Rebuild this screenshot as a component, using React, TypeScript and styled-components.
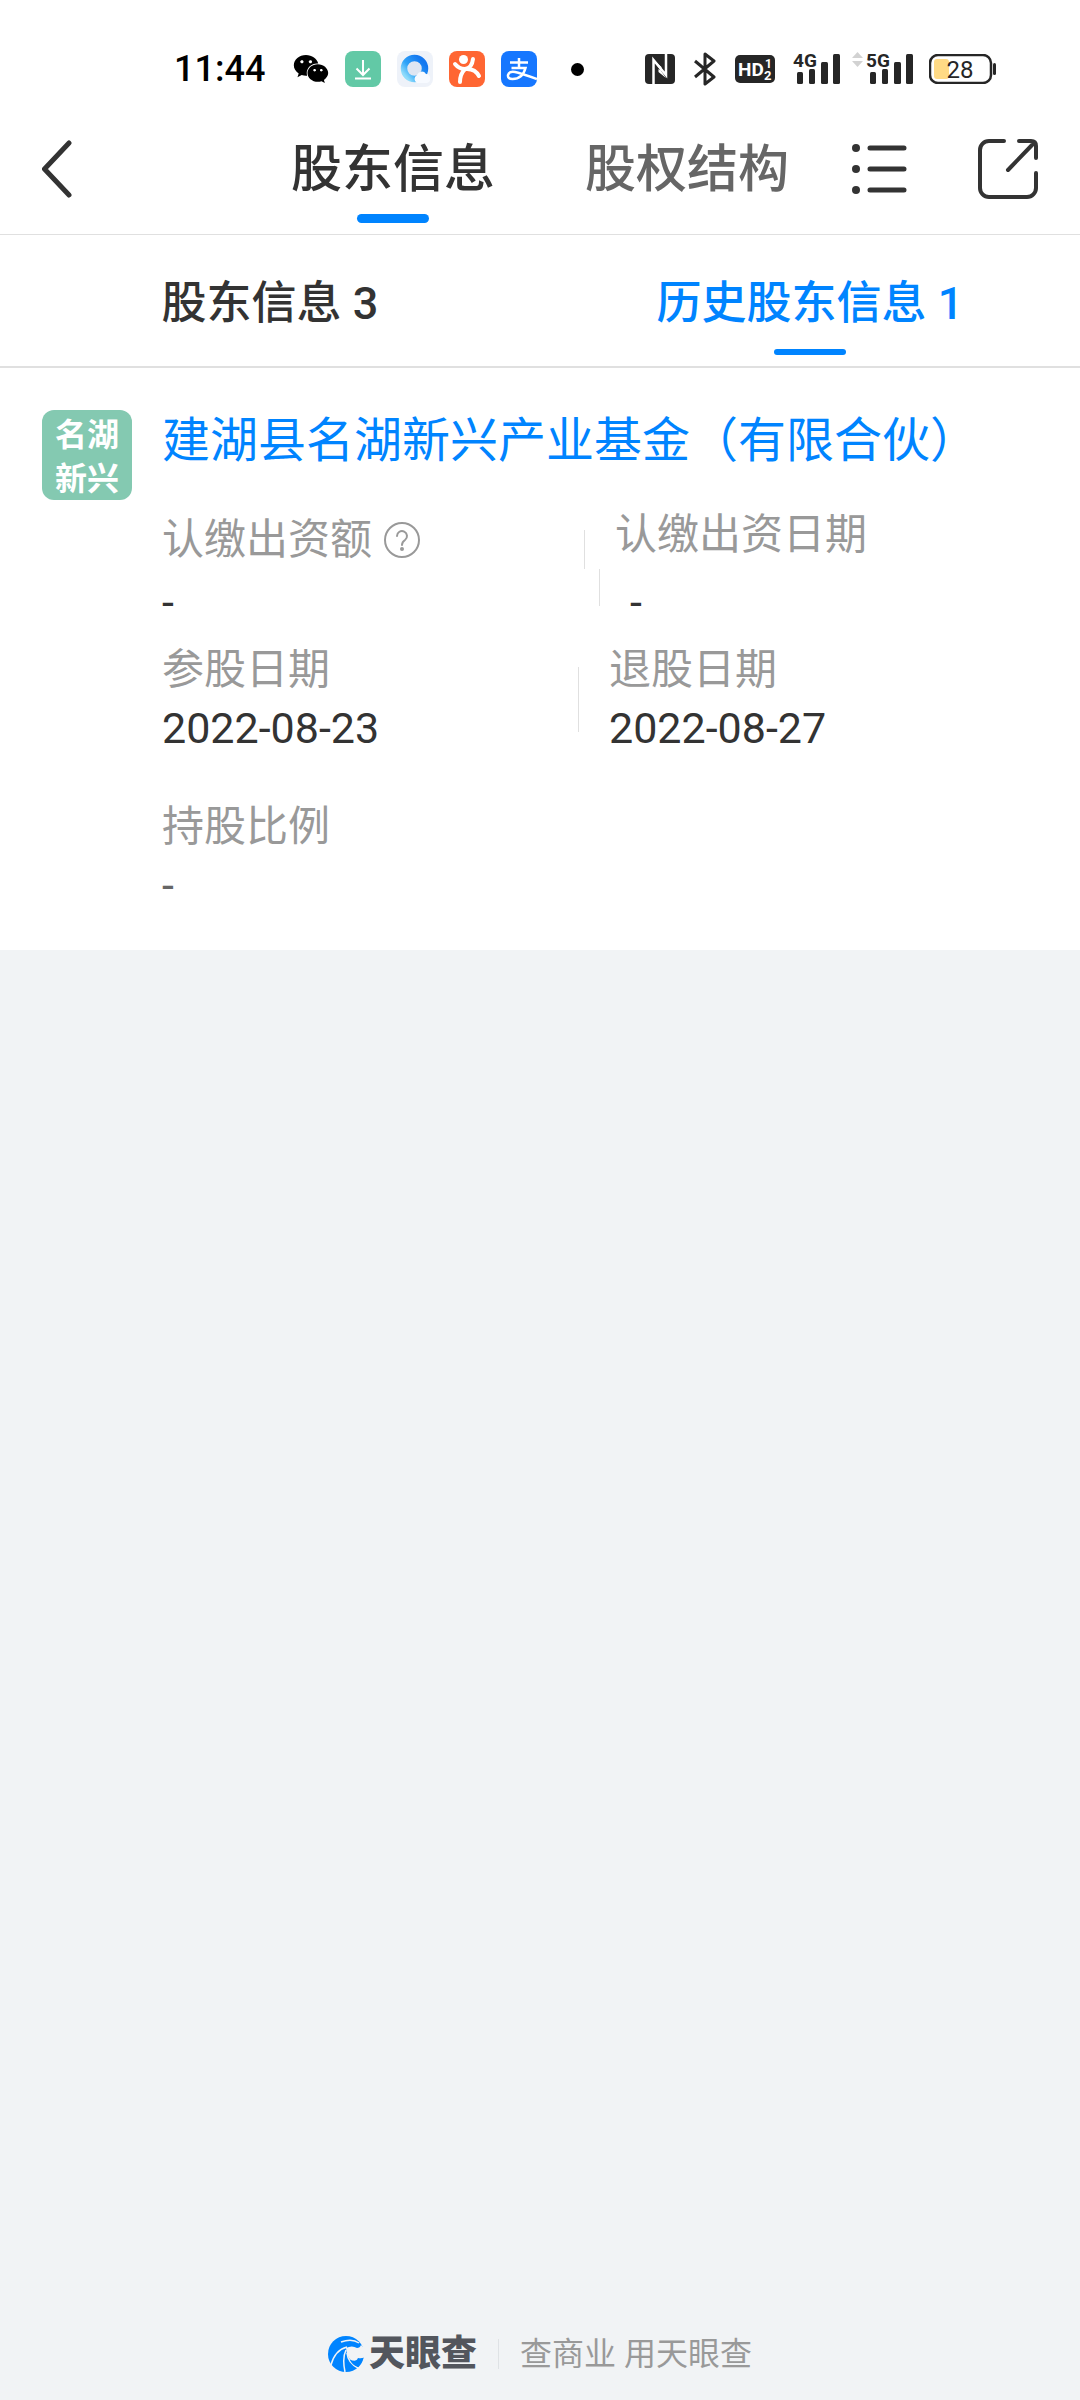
import React from "react";
import styled, { createGlobalStyle } from "styled-components";
import { FaWeixin } from "react-icons/fa";

const BLUE = "#0084ff";
const INK = "#333333";
const GREY = "#999999";
const LINE = "#e0e0e0";

const GlobalStyle = createGlobalStyle`
  * { box-sizing: border-box; }
  body {
    margin: 0;
    background: #f1f3f5;
    color: ${INK};
    font-family: Roboto, "Noto Sans CJK SC", sans-serif;
  }
  button {
    padding: 0;
    border: 0;
    background: none;
    color: inherit;
    font: inherit;
    cursor: pointer;
  }
  svg { display: block; flex: none; }
`;

const Page = styled.div`
  display: flex;
  flex-direction: column;
  min-height: 100vh;
`;

/* ---------- status bar ---------- */

const StatusBar = styled.div`
  display: flex;
  justify-content: space-between;
  align-items: flex-end;
  height: 103px;
  padding: 0 84px 16px 174px;
  background: #fff;
  color: #000;
`;

const StatusGroup = styled.div<{ $gap: number }>`
  display: flex;
  align-items: center;
  gap: ${(p) => p.$gap}px;
  height: 36px;
`;

const Clock = styled.time`
  margin-right: 12px;
  font-size: 36px;
  line-height: 38px;
  font-weight: 500;
`;

const MoreDot = styled.i`
  width: 13px;
  height: 13px;
  margin-left: 18px;
  border-radius: 50%;
  background: #000;
`;

const AppIcon = styled.span<{ $bg: string }>`
  display: block;
  width: 36px;
  height: 36px;
  border-radius: 8px;
  overflow: hidden;
  background: ${(p) => p.$bg};
`;

const Signal = ({ label, traffic }: { label: string; traffic?: boolean }) => (
  <svg width={traffic ? 61 : 47} height="48" viewBox={traffic ? "-14 -6 61 48" : "0 -6 47 48"}>
    {traffic && (
      <g fill="#d2d2d2">
        <path d="M-14 7h11L-8.500 1z" />
        <path d="M-14 10h11L-8.500 16z" />
      </g>
    )}
    <text x="0" y="16" fontFamily="Roboto" fontWeight="700" fontSize="19" fill="#262626">
      {label}
    </text>
    <g fill="#262626">
      <rect x="4" y="21" width="6" height="12" rx="1.500" />
      <rect x="16" y="18" width="6" height="15" rx="1.500" />
      <rect x="28" y="11" width="7" height="22" rx="1.500" />
      <rect x="40" y="3" width="7" height="30" rx="1.500" />
    </g>
  </svg>
);

/* ---------- navigation ---------- */

const NavBar = styled.header`
  display: grid;
  grid-template-columns: 1fr auto 1fr;
  align-items: center;
  height: 132px;
  padding: 0 42px;
  border-bottom: 1px solid ${LINE};
  background: #fff;
`;

const NavTabs = styled.nav`
  display: flex;
  align-self: stretch;
  gap: 90px;
`;

const Tab = styled.button<{ $active?: boolean; $size: number }>`
  position: relative;
  font-size: ${(p) => p.$size}px;
  font-weight: 500;
`;

const NavTab = styled(Tab)`
  padding-bottom: 8px;
  color: ${(p) => (p.$active ? INK : "#666666")};
`;

const Marker = styled.span<{ $height: number; $bottom: number }>`
  position: absolute;
  left: 50%;
  bottom: ${(p) => p.$bottom}px;
  width: 72px;
  height: ${(p) => p.$height}px;
  margin-left: -36px;
  border-radius: 5px;
  background: ${BLUE};
`;

const NavActions = styled.div`
  display: flex;
  justify-content: flex-end;
  align-items: center;
  gap: 70px;
`;

const IconButton = styled.button`
  display: block;
  justify-self: start;
`;

const SubTabs = styled.nav`
  display: grid;
  grid-template-columns: 1fr 1fr;
  height: 133px;
  border-bottom: 2px solid ${LINE};
  background: #fff;
`;

const SubTab = styled(Tab)`
  padding-bottom: 2px;
  color: ${(p) => (p.$active ? BLUE : INK)};
`;

/* ---------- shareholder card ---------- */

const Card = styled.article`
  display: grid;
  grid-template-columns: 90px 1fr;
  gap: 30px;
  padding: 42px 42px 36px;
  background: #fff;
`;

const Badge = styled.div`
  display: flex;
  flex-direction: column;
  justify-content: center;
  width: 90px;
  height: 90px;
  padding-top: 4px;
  border-radius: 12px;
  background: #84c9b1;
  color: #fff;
  font-size: 32px;
  line-height: 44px;
  font-weight: 700;
  text-align: center;
`;

const Name = styled.a`
  display: block;
  margin-bottom: 34px;
  color: ${BLUE};
  font-size: 48px;
  line-height: 62px;
  text-decoration: none;
`;

const Row = styled.div<{ $split: string; $gapTop?: number }>`
  display: grid;
  grid-template-columns: ${(p) => p.$split};
  margin-top: ${(p) => p.$gapTop ?? 0}px;
`;

const Field = styled.div`
  display: flex;
  flex-direction: column;
`;

const Divided = styled.div<{ $rule: number; $align: string }>`
  display: flex;
  gap: 30px;
  &::before {
    content: "";
    align-self: ${(p) => p.$align};
    width: 1px;
    height: ${(p) => p.$rule}px;
    background: ${LINE};
  }
`;

const Label = styled.div`
  display: flex;
  align-items: center;
  gap: 12px;
  color: ${GREY};
  font-size: 42px;
  line-height: 58px;
`;

const LabelRow = styled(Row)`
  height: 63px;
  & > ${Label} {
    align-self: end;
  }
  & > ${Divided} > ${Label} {
    align-self: flex-start;
  }
`;

const Value = styled.div<{ $muted?: boolean }>`
  color: ${(p) => (p.$muted ? "#666666" : INK)};
  font-size: 43px;
  line-height: 58px;
`;

const ValueRow = styled(Row)`
  ${Value} {
    padding-top: 4px;
  }
`;

/* ---------- footer ---------- */

const Footer = styled.footer`
  display: flex;
  justify-content: center;
  align-items: center;
  margin-top: auto;
  padding-bottom: 28px;
`;

const Brand = styled.span`
  margin-left: 5px;
  color: #53565d;
  font-size: 36px;
  line-height: 36px;
  font-weight: 900;
`;

const FooterRule = styled.i`
  width: 1px;
  height: 30px;
  margin: 0 21px;
  background: #dfe2e5;
`;

const Slogan = styled.span`
  color: ${GREY};
  font-size: 32px;
  line-height: 36px;
`;

export default function App() {
  return (
    <Page>
      <GlobalStyle />
      <StatusBar>
        <StatusGroup $gap={16}>
          <Clock>11:44</Clock>
          <FaWeixin size={36} />
          <AppIcon $bg="#62c9a6">
            <svg width="36" height="36" fill="none" stroke="#fff" strokeWidth="2">
              <path d="M18 9v15M11.500 17.500L18 24l6.500-6.500M10 27.500h16" />
            </svg>
          </AppIcon>
          <AppIcon $bg="#eef2f9">
            <svg width="36" height="36">
              <defs>
                <linearGradient id="ring" x1="0.9" y1="0.2" x2="0.1" y2="0.9">
                  <stop offset="0" stopColor="#1478f0" />
                  <stop offset="0.6" stopColor="#2fa4f8" />
                  <stop offset="1" stopColor="#8fdcfb" />
                </linearGradient>
              </defs>
              <circle cx="17.500" cy="17.500" r="10.500" fill="#dfe6f2" stroke="url(#ring)" strokeWidth="6.500" />
              <path
                d="M20 32a4.500 4.500 0 0 1 0-8 5 5 0 0 1 9-1 4.600 4.600 0 0 1 1 9z"
                fill="#f7faff"
              />
            </svg>
          </AppIcon>
          <AppIcon $bg="#ff6633">
            <svg width="36" height="36" fill="none" stroke="#fff" strokeWidth="4" strokeLinecap="round">
              <circle cx="14.500" cy="8.500" r="4.500" fill="#fff" stroke="none" />
              <path d="M6 13q4 5 10 5 7-1 8-10M16 18q-5 5-5 13M16 18q10-1 14 7" />
            </svg>
          </AppIcon>
          <AppIcon $bg="#1677ff">
            <svg width="36" height="36" fill="none" stroke="#fff" strokeWidth="2.500">
              <path d="M9 11.500h18M18 7v10M10.500 17h14q-3 11-13 11-5 0-4.500-4 1-4 7-3 5 1 22 7" />
            </svg>
          </AppIcon>
          <MoreDot />
        </StatusGroup>
        <StatusGroup $gap={16}>
          <StatusGroup $gap={18}>
            <svg width="30" height="30" viewBox="0 0 30 30">
              <rect width="30" height="30" rx="4" fill="#262626" />
              <path d="M8.500 30V6l12.500 15V0" fill="none" stroke="#fff" strokeWidth="2.500" />
              <path d="M8.500 6l8 7v4l-3-2v3l7.500 6" fill="#fff" />
            </svg>
            <svg width="24" height="34" viewBox="0 0 24 34" fill="none" stroke="#262626" strokeWidth="3" strokeLinejoin="round">
              <path d="M2 9l19 16-9 7V2l9 7L2 25" />
            </svg>
            <svg width="40" height="28" viewBox="0 0 40 28">
              <rect width="40" height="28" rx="5" fill="#262626" />
              <g fill="#fff" fontFamily="Roboto" fontWeight="700">
                <text x="3" y="21" fontSize="19">HD</text>
                <text x="30" y="13" fontSize="12">1</text>
                <text x="29" y="25" fontSize="13">2</text>
              </g>
            </svg>
            <StatusGroup $gap={12}>
              <Signal label="4G" />
              <Signal label="5G" traffic />
            </StatusGroup>
          </StatusGroup>
          <svg width="67" height="30" viewBox="0 0 67 30">
            <rect x="5" y="5" width="15" height="20" rx="3" fill="#ffda85" />
            <rect x="1" y="1" width="61" height="28" rx="8" fill="none" stroke="#262626" strokeWidth="2.500" />
            <rect x="64" y="9" width="3" height="12" rx="1.500" fill="#262626" />
            <text x="31" y="24" textAnchor="middle" fontFamily="Roboto" fontSize="24" fill="#262626">
              28
            </text>
          </svg>
        </StatusGroup>
      </StatusBar>

      <NavBar>
        <IconButton aria-label="返回">
          <svg width="30" height="58" viewBox="0 0 30 58" fill="none" stroke={INK} strokeWidth="5" strokeLinecap="round" strokeLinejoin="round">
            <path d="M27 3L2.500 29 27 55" />
          </svg>
        </IconButton>
        <NavTabs>
          <NavTab $active $size={51}>
            股东信息
            <Marker $height={9} $bottom={11} />
          </NavTab>
          <NavTab $size={51}>股权结构</NavTab>
        </NavTabs>
        <NavActions>
          <IconButton aria-label="列表">
            <svg width="56" height="50" viewBox="0 0 56 50" stroke={INK} strokeWidth="5" strokeLinecap="round">
              <path d="M18 4h34M18 25h34M18 46h34" />
              <g fill={INK} stroke="none">
                <circle cx="4" cy="4" r="4" />
                <circle cx="4" cy="25" r="4" />
                <circle cx="4" cy="46" r="4" />
              </g>
            </svg>
          </IconButton>
          <IconButton aria-label="分享">
            <svg width="60" height="60" viewBox="0 0 60 60" fill="none" stroke={INK} strokeWidth="4" strokeLinecap="round" strokeLinejoin="round">
              <path d="M26 2H11a9 9 0 0 0-9 9v38a9 9 0 0 0 9 9h38a9 9 0 0 0 9-9V34" />
              <path d="M41 2h12q5 0 5 5v12M55 5L30 31" />
            </svg>
          </IconButton>
        </NavActions>
      </NavBar>

      <SubTabs>
        <SubTab $size={45}>股东信息 3</SubTab>
        <SubTab $active $size={45}>
          历史股东信息 1
          <Marker $height={6} $bottom={11} />
        </SubTab>
      </SubTabs>

      <Card>
        <Badge>
          <span>名湖</span>
          <span>新兴</span>
        </Badge>
        <div>
          <Name href="#company">建湖县名湖新兴产业基金（有限合伙）</Name>
          <LabelRow $split="422fr 454fr">
            <Label>
              认缴出资额
              <IconButton aria-label="说明">
                <svg width="36" height="36" viewBox="0 0 36 36" fill="none" stroke={GREY} strokeWidth="2" strokeLinecap="round">
                  <circle cx="18" cy="18" r="17" />
                  <path d="M13 14a5 5 0 1 1 8 4q-3 2-3 5" />
                  <circle cx="18" cy="27" r="1" fill={GREY} />
                </svg>
              </IconButton>
            </Label>
            <Divided $rule={39} $align="flex-end">
              <Label>认缴出资日期</Label>
            </Divided>
          </LabelRow>
          <ValueRow $split="437fr 439fr">
            <Value>-</Value>
            <Divided $rule={37} $align="flex-start">
              <Value>-</Value>
            </Divided>
          </ValueRow>
          <Row $split="416fr 460fr" $gapTop={10}>
            <Field>
              <Label>参股日期</Label>
              <Value>2022-08-23</Value>
            </Field>
            <Divided $rule={65} $align="center">
              <Field>
                <Label>退股日期</Label>
                <Value>2022-08-27</Value>
              </Field>
            </Divided>
          </Row>
          <Row $split="1fr" $gapTop={41}>
            <Field>
              <Label>持股比例</Label>
              <Value $muted>-</Value>
            </Field>
          </Row>
        </div>
      </Card>

      <Footer>
        <svg width="36" height="36" viewBox="0 0 36 36">
          <circle cx="18" cy="18" r="18" fill={BLUE} />
          <g fill="none" stroke="#f1f3f5" strokeWidth="1.500">
            <path d="M13 6q11-4 18 1" />
            <path d="M3 29Q7 14 19 11" />
            <path d="M17 36q-3-14 1-22" />
            <path d="M30 32q-10-5-11-15" />
          </g>
          <path d="M18 12q6-3 11 0 3 0 4-3l4 4v8q-3 2-7 1-2 4-6 3-5-3-6-13z" fill="#f1f3f5" />
          <path d="M22 24q7 2 13-2-1 5-5 9-6-2-8-7z" fill={BLUE} />
        </svg>
        <Brand>天眼查</Brand>
        <FooterRule />
        <Slogan>查商业 用天眼查</Slogan>
      </Footer>
    </Page>
  );
}
